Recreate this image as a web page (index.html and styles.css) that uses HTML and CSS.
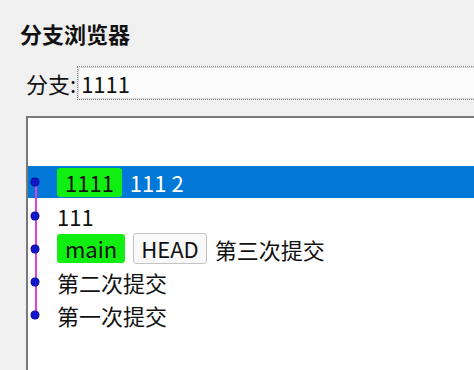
FILE: index.html
```html
<!DOCTYPE html>
<html lang="zh">

<head>
    <meta charset="UTF-8">
    <meta name="viewport" content="width=device-width, initial-scale=1.0">
    <title>分支浏览器</title>
    <link rel="stylesheet" href="styles.css">
</head>

<body>
    <h2 class="title">分支浏览器</h2>

    <div class="branch-row">
        <span class="label">分支:</span>
        <input type="text" class="branch-input" value="1111">
    </div>

    <div class="log">
        <div class="commit selected first">
            <span class="graph"><span class="dot"></span></span>
            <span class="tag branch">1111</span>
            <span class="msg">111 2</span>
        </div>
        <div class="commit">
            <span class="graph"><span class="dot"></span></span>
            <span class="msg">111</span>
        </div>
        <div class="commit">
            <span class="graph"><span class="dot"></span></span>
            <span class="tag branch">main</span>
            <span class="tag head">HEAD</span>
            <span class="msg">第三次提交</span>
        </div>
        <div class="commit">
            <span class="graph"><span class="dot"></span></span>
            <span class="msg">第二次提交</span>
        </div>
        <div class="commit last">
            <span class="graph"><span class="dot"></span></span>
            <span class="msg">第一次提交</span>
        </div>
    </div>
</body>

</html>
```

FILE: styles.css
```css
body {
    font-family: 'Noto Sans CJK SC', 'Noto Sans', sans-serif;
    background: #f0f0f0;
    color: #111;
    margin: 0;
    height: 370px;
    overflow: hidden;
}

.title {
    margin: 0;
    padding: 17px 0 0 20px;
    font-size: 22px;
    line-height: 32px;
    font-weight: bold;
}

.branch-row {
    display: flex;
    align-items: center;
    margin-top: 17px;
    padding-left: 26px;
    height: 34px;
}

.label {
    font-size: 22px;
    line-height: 34px;
}

.branch-input {
    flex: 1;
    min-width: 0;
    height: 34px;
    box-sizing: border-box;
    margin: 0 -4px 0 1px;
    padding: 0 3px;
    font-family: inherit;
    font-size: 22px;
    color: #111;
    background: #fcfcfc;
    border: 1px dotted #7c7c7c;
    box-shadow: inset 0 0 0 1px #d8d8d8;
    outline: none;
}

.log {
    box-sizing: border-box;
    margin: 16px -4px 0 26px;
    padding-top: 48px;
    height: 254px;
    background: white;
    border-top: 2px solid #7a7a7a;
    border-left: 2px solid #7a7a7a;
}

.commit {
    display: flex;
    align-items: center;
    gap: 8px;
    height: 33px;
    font-size: 22px;
}

.commit.selected {
    height: 32px;
    margin-bottom: 1px;
    background: #0078d7;
    color: white;
}

.graph {
    position: relative;
    align-self: stretch;
    width: 21px;
    flex-shrink: 0;
}

.graph::before {
    content: "";
    position: absolute;
    left: 7px;
    top: 0;
    bottom: 0;
    width: 2px;
    background: #e040e0;
}

.first .graph::before {
    top: 50%;
    bottom: -1px;
}

.last .graph::before {
    bottom: 50%;
}

.dot {
    position: absolute;
    left: 3px;
    top: 50%;
    width: 8px;
    height: 8px;
    margin-top: -4px;
    border-radius: 50%;
    background: #1414c8;
    box-shadow: 0 0 0 0.5px #000080;
}

.tag {
    height: 29px;
    line-height: 28px;
    padding: 0 8px;
    border-radius: 3px;
    box-sizing: border-box;
    color: #111;
}

.tag.branch {
    background: #11ee11;
}

.tag.head {
    background: #f8f8f8;
    border: 1px solid #c4c4c4;
    height: 31px;
    padding: 0 7px;
}
```
